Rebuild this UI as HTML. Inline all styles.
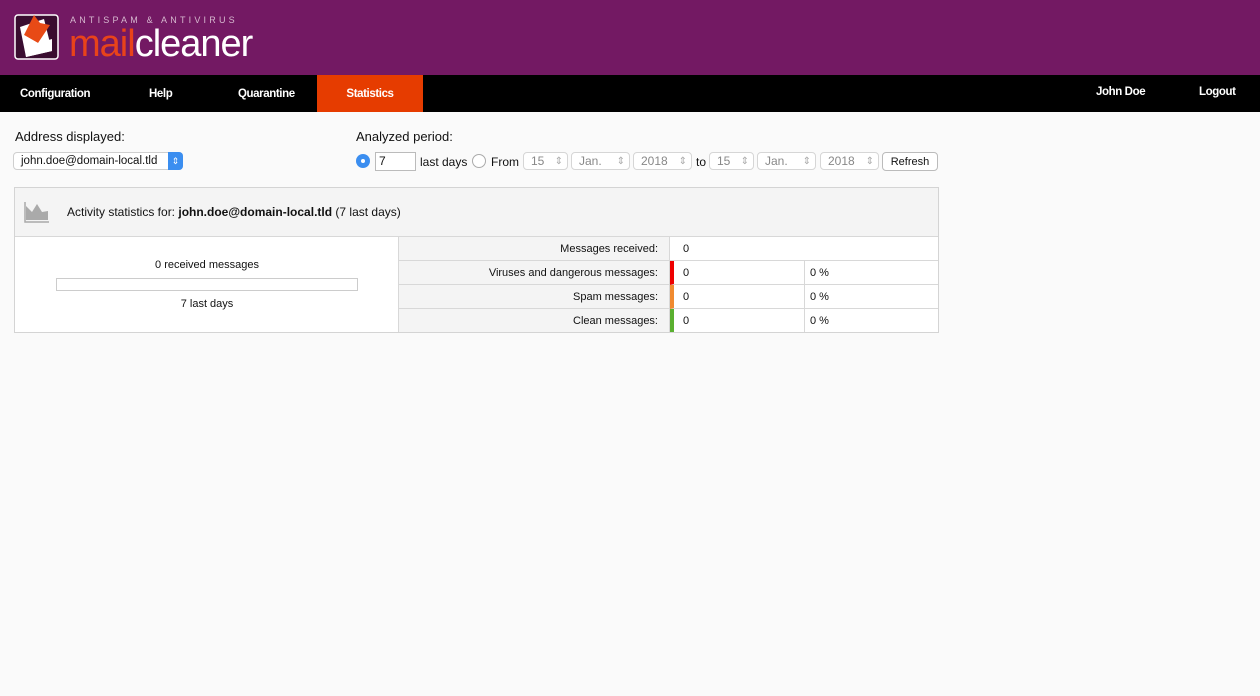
<!DOCTYPE html>
<html><head><meta charset="utf-8"><style>
*{margin:0;padding:0;box-sizing:border-box}
body{width:1260px;height:696px;background:#fafafa;font-family:"Liberation Sans",Arial,sans-serif;font-size:12px;color:#111;position:relative;overflow:hidden}
.a{position:absolute}
#hd{left:0;top:0;width:1260px;height:75px;background:#731963}
#nav{left:0;top:75px;width:1260px;height:37px;background:#000}
.n{position:absolute;top:1px;height:37px;line-height:37px;color:#fff;font-weight:bold;font-size:11.5px;letter-spacing:-0.4px}
.sel{position:absolute;height:18px;border:1px solid #d6d6d6;border-radius:4px;background:#fff;color:#888;font-size:12px;line-height:17px;padding-left:7px}
.sel:after{content:"⇕";position:absolute;right:4px;top:0;color:#aaa;font-size:10px}
.c{position:absolute;border-color:#d8d8d8;border-style:solid;border-width:0 1px 1px 0;height:24px;line-height:24px;font-size:11px}
</style></head><body>
<div id="hd" class="a">
 <svg class="a" style="left:14px;top:13px" width="46" height="48" viewBox="0 0 46 48">
  <rect x="1" y="2" width="43" height="44" rx="3" fill="#3a0d30" stroke="#fff" stroke-width="1.5"/>
  <polygon points="6,14 30,6 38,38 12,44" fill="#fff"/>
  <polygon points="10,22 20,2 26,10 36,12 24,30" fill="#e84a16"/>
  <polygon points="10,22 24,30 38,26 38,38 12,44" fill="#fff"/>
 </svg>
 <div class="a" style="left:70px;top:15px;color:#d6b8cf;font-size:9px;letter-spacing:3.2px">ANTISPAM &amp; ANTIVIRUS</div>
 <div class="a" style="left:69px;top:23px;font-size:38px;letter-spacing:-1px;color:#fff"><span style="color:#e8431a">mail</span>cleaner</div>
</div>
<div id="nav" class="a">
 <div class="n" style="left:20px">Configuration</div>
 <div class="n" style="left:149px">Help</div>
 <div class="n" style="left:238px">Quarantine</div>
 <div class="n" style="left:317px;width:106px;background:#e63c00;text-align:center;top:0;line-height:39px">Statistics</div>
 <div class="n" style="left:1096px;line-height:32px">John Doe</div>
 <div class="n" style="left:1199px;line-height:32px">Logout</div>
</div>
<div class="a" style="left:15px;top:129px;font-size:13px">Address displayed:</div>
<div class="a" style="left:13px;top:152px;width:170px;height:18px;border:1px solid #cfcfcf;border-radius:4px;background:#fff;font-size:11.5px;line-height:17px;padding-left:7px">john.doe@domain-local.tld<div class="a" style="right:-1px;top:-1px;width:15px;height:18px;background:#3b8ef0;border-radius:0 4px 4px 0;color:#fff;font-size:9px;text-align:center;line-height:18px">⇕</div></div>
<div class="a" style="left:356px;top:129px;font-size:13px">Analyzed period:</div>
<div class="a" style="left:356px;top:154px;width:14px;height:14px;border-radius:50%;background:#3b8ef0"><div class="a" style="left:5px;top:5px;width:4px;height:4px;border-radius:50%;background:#fff"></div></div>
<div class="a" style="left:375px;top:152px;width:41px;height:19px;border:1px solid #bbb;background:#fff;font-size:12px;line-height:17px;padding-left:3px">7</div>
<div class="a" style="left:420px;top:155px;font-size:12px">last days</div>
<div class="a" style="left:472px;top:154px;width:14px;height:14px;border-radius:50%;border:1px solid #aaa;background:#fff"></div>
<div class="a" style="left:491px;top:155px;font-size:12px">From</div>
<div class="sel" style="left:523px;top:152px;width:45px">15</div>
<div class="sel" style="left:571px;top:152px;width:59px">Jan.</div>
<div class="sel" style="left:633px;top:152px;width:59px">2018</div>
<div class="a" style="left:696px;top:155px;font-size:12px">to</div>
<div class="sel" style="left:709px;top:152px;width:45px">15</div>
<div class="sel" style="left:757px;top:152px;width:59px">Jan.</div>
<div class="sel" style="left:820px;top:152px;width:59px">2018</div>
<div class="a" style="left:882px;top:152px;width:56px;height:19px;border:1px solid #bbb;border-radius:4px;background:#fff;font-size:11px;line-height:18px;text-align:center">Refresh</div>

<div class="a" style="left:14px;top:187px;width:925px;height:146px;border:1px solid #d4d4d4;background:#f4f4f4"></div>
<svg class="a" style="left:24px;top:200px" width="26" height="24"><polygon points="2,20 2,6 8,12 13,4 18,12 24,11 24,20" fill="#aaa"/><path d="M1,2 V22 H25" stroke="#aaa" stroke-width="1.5" fill="none"/></svg>
<div class="a" style="left:67px;top:205px;font-size:12px">Activity statistics for: <b>john.doe@domain-local.tld</b> (7 last days)</div>
<div class="a" style="left:15px;top:236px;width:384px;height:96px;background:#fff;border-top:1px solid #d8d8d8;border-right:1px solid #d8d8d8"></div>
<div class="a" style="left:15px;top:259px;width:384px;text-align:center;font-size:11px">0 received messages</div>
<div class="a" style="left:56px;top:278px;width:302px;height:13px;border:1px solid #ccc;background:#fff"></div>
<div class="a" style="left:15px;top:298px;width:384px;text-align:center;font-size:11px">7 last days</div>

<div class="a" style="left:399px;top:236px;width:539px;border-top:1px solid #d8d8d8"></div>
<div class="c" style="left:399px;top:237px;width:271px;text-align:right;padding-right:11px;height:24px">Messages received:</div>
<div class="c" style="left:670px;top:237px;width:268px;background:#fff;padding-left:13px;border-right:0">0</div>
<div class="c" style="left:399px;top:261px;width:271px;text-align:right;padding-right:11px">Viruses and dangerous messages:</div>
<div class="c" style="left:670px;top:261px;width:135px;background:#fff;padding-left:9px;border-left:4px solid #e00">0</div>
<div class="c" style="left:805px;top:261px;width:133px;background:#fff;padding-left:5px;border-right:0">0 %</div>
<div class="c" style="left:399px;top:285px;width:271px;text-align:right;padding-right:11px">Spam messages:</div>
<div class="c" style="left:670px;top:285px;width:135px;background:#fff;padding-left:9px;border-left:4px solid #f08a30">0</div>
<div class="c" style="left:805px;top:285px;width:133px;background:#fff;padding-left:5px;border-right:0">0 %</div>
<div class="c" style="left:399px;top:309px;width:271px;text-align:right;padding-right:11px;border-bottom:0;height:23px">Clean messages:</div>
<div class="c" style="left:670px;top:309px;width:135px;background:#fff;padding-left:9px;border-left:4px solid #5ab030;border-bottom:0;height:23px">0</div>
<div class="c" style="left:805px;top:309px;width:133px;background:#fff;padding-left:5px;border-bottom:0;border-right:0;height:23px">0 %</div>
</body></html>
